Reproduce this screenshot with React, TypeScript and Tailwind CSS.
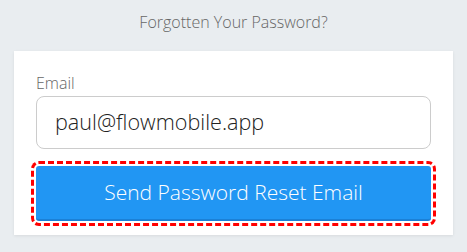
import * as React from "react"

export default function App() {
  return (
    <div className="min-h-[252px] w-full bg-[#e9edf0] px-[14px] pt-[10px] font-['Open_Sans',sans-serif] font-light">
      <h1 className="text-center text-[16px] leading-[24px] font-light text-[#666]">
        Forgotten Your Password?
      </h1>
      <div className="mt-[17px] bg-white px-[22px] pt-[20px] pb-[14px] shadow-[0_1px_3px_rgba(0,0,0,0.08)]">
        <label className="block text-[16px] leading-[24px] text-[#666]">Email</label>
        <div className="mt-[1px] flex h-[53px] items-center rounded-[8px] border border-[#ccc] px-[18px] text-[21.6px] font-light text-[#222]">
          paul@flowmobile.app
        </div>
        <button className="mt-[17px] flex h-[55px] w-full items-center justify-center rounded-[3px] border-b-2 border-[#1b80d6] bg-[#2196f3] text-[21px] font-light text-white outline-[3px] outline-offset-[2px] outline-[#f00] outline-dashed">
          Send Password Reset Email
        </button>
      </div>
    </div>
  )
}
